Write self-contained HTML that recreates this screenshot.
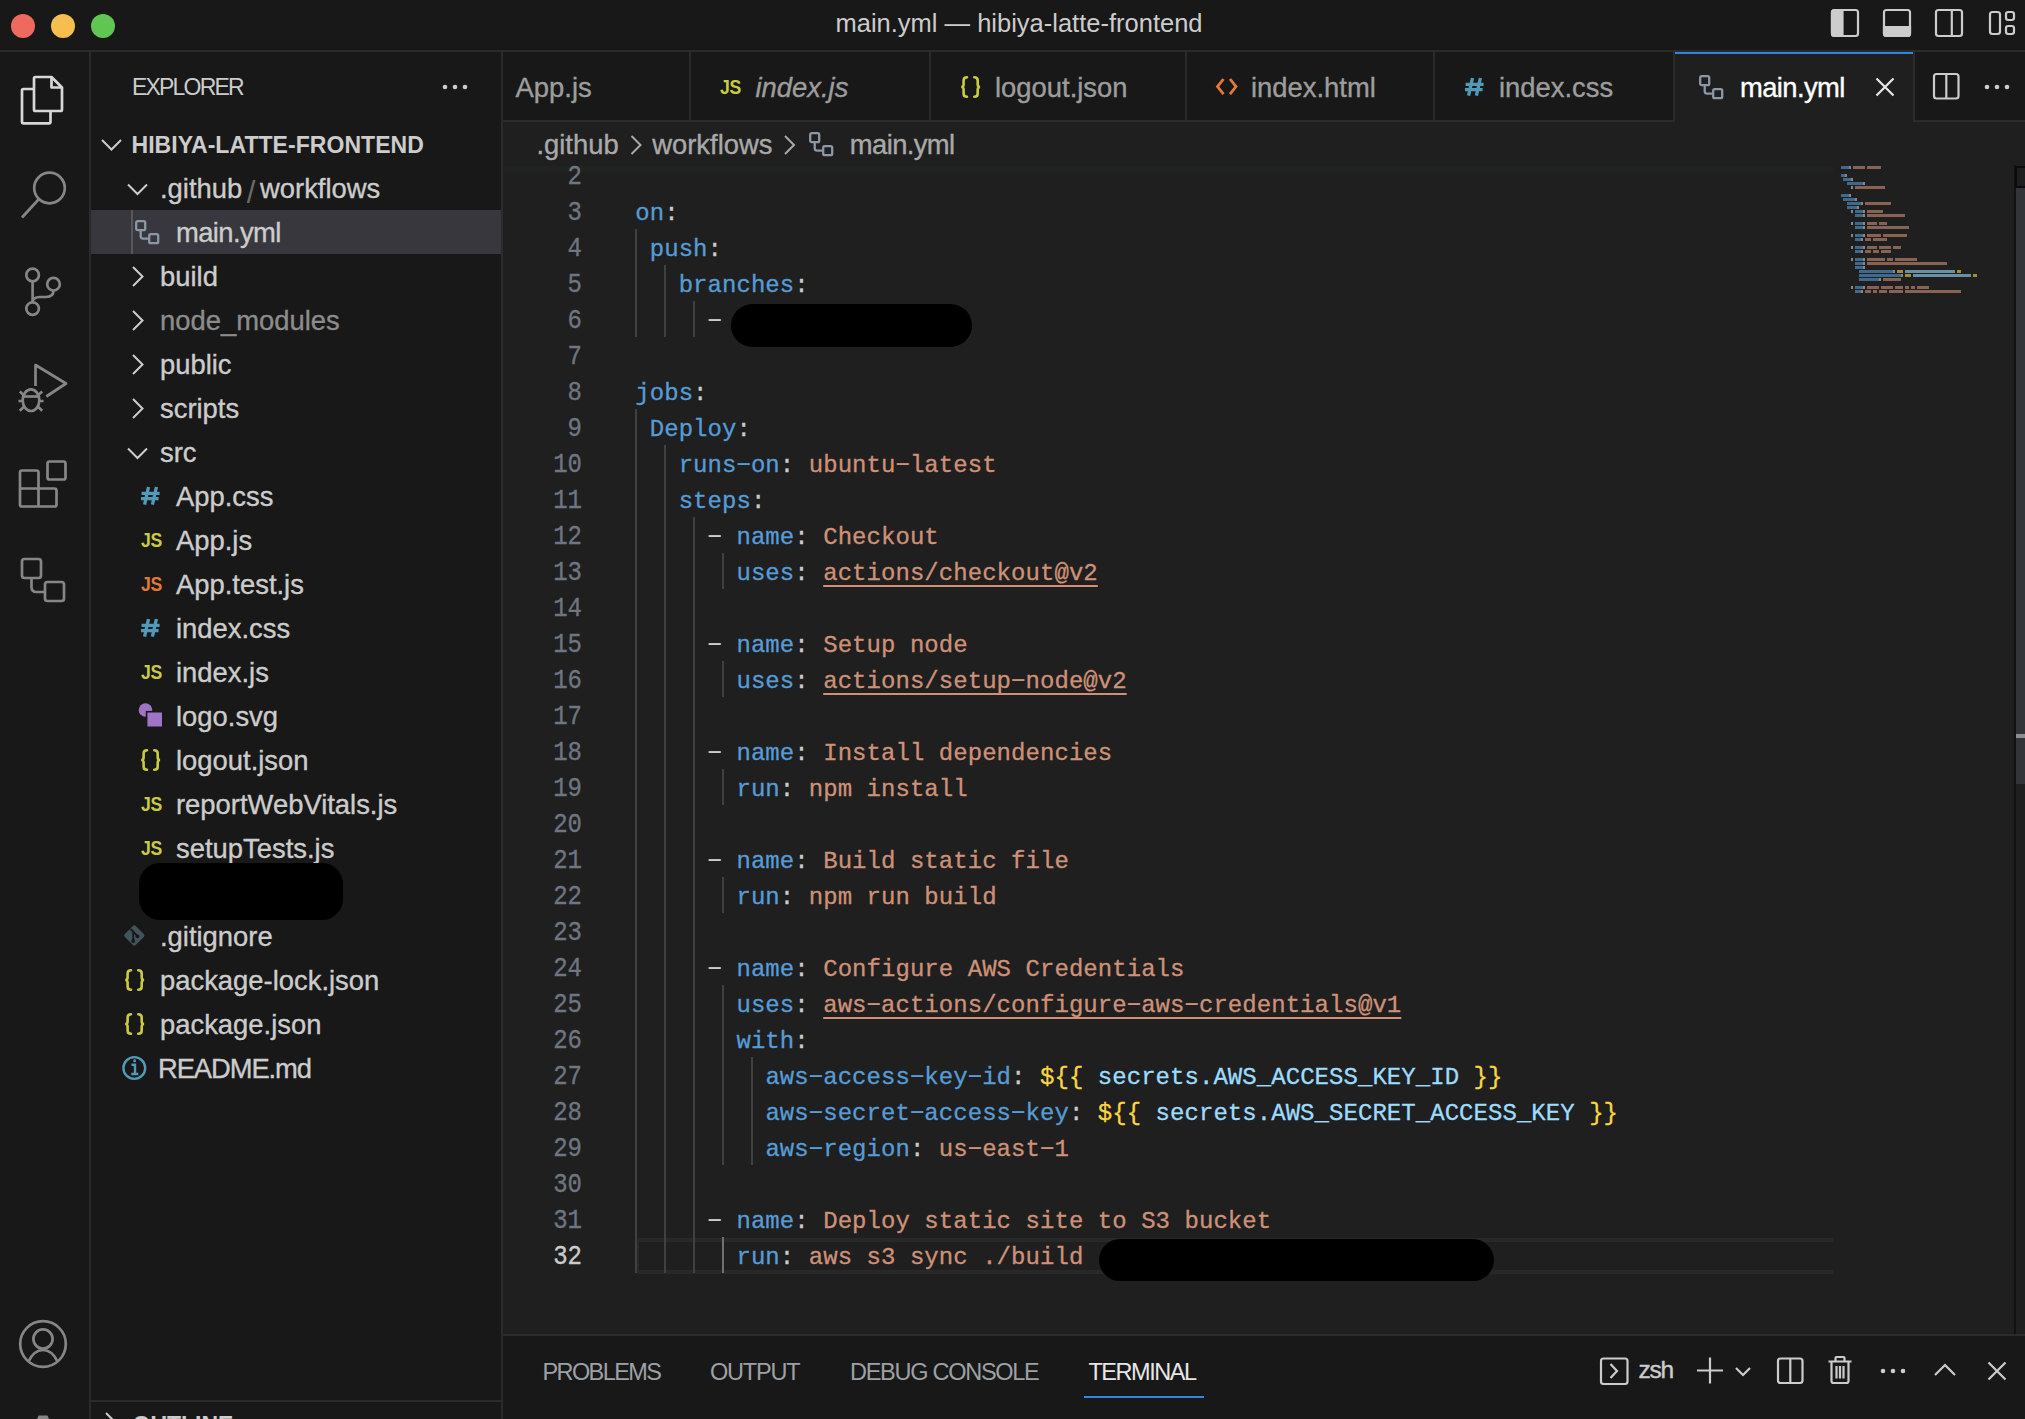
<!DOCTYPE html>
<html><head><meta charset="utf-8"><title>main.yml</title><style>
*{margin:0;padding:0;box-sizing:border-box}
html,body{width:2025px;height:1419px;overflow:hidden;background:#181818}
body{position:relative;font-family:"Liberation Sans",sans-serif;color:#cccccc}
.a{position:absolute}
.t{position:absolute;white-space:pre;line-height:44px;height:44px;font-size:27.4px;-webkit-text-stroke:0.35px currentColor}
.code{position:absolute;white-space:pre;font-family:"Liberation Mono",monospace;font-size:24px;line-height:36px;height:36px;letter-spacing:0.05px;-webkit-text-stroke:0.3px currentColor}
.ln{position:absolute;white-space:pre;font-family:"Liberation Mono",monospace;font-size:24px;line-height:36px;height:36px;text-align:right;color:#6e7681;width:60px;-webkit-text-stroke:0.3px currentColor}
.k{color:#569cd6}.s{color:#ce9178}.p{color:#cccccc}.y{color:#fad641}.v{color:#9cdcfe}
.u{text-decoration:underline;text-decoration-thickness:2px;text-underline-offset:5px}
svg{position:absolute;overflow:visible}
</style></head><body>
<div class="a" style="left:0px;top:0px;width:2025px;height:50px;background:#181818;"></div>
<div class="a" style="left:0px;top:50px;width:2025px;height:2px;background:#2b2b2b;"></div>
<div class="a" style="left:89px;top:52px;width:2px;height:1367px;background:#2b2b2b;"></div>
<div class="a" style="left:501px;top:52px;width:2px;height:1367px;background:#2b2b2b;"></div>
<div class="a" style="left:503px;top:52px;width:1522px;height:68px;background:#181818;"></div>
<div class="a" style="left:503px;top:120px;width:1522px;height:2px;background:#2b2b2b;"></div>
<div class="a" style="left:503px;top:122px;width:1522px;height:1212px;background:#1f1f1f;"></div>
<div class="a" style="left:503px;top:1334px;width:1522px;height:2px;background:#2b2b2b;"></div>
<div class="a" style="left:503px;top:1336px;width:1522px;height:83px;background:#181818;"></div>
<svg width="2025" height="50" style="left:0;top:0"><circle cx="23" cy="26" r="12" fill="#ee6a5f"/><circle cx="63" cy="26" r="12" fill="#f5be4f"/><circle cx="103" cy="26" r="12" fill="#61c554"/></svg>
<div class="a" style="left:0;width:2025px;top:0;height:50px;line-height:46px;text-align:center;font-size:25.5px;color:#cccccc;padding-left:13px">main.yml — hibiya-latte-frontend</div>
<svg width="2025" height="50" style="left:0;top:0" fill="none" stroke="#cccccc" stroke-width="2.2"><rect x="1832" y="10" width="26" height="26" rx="2.5"/><path d="M1832 12.5 Q1832 10 1834.5 10 H1842.5 V36 H1834.5 Q1832 36 1832 33.5 Z" fill="#cccccc"/><rect x="1884" y="10" width="26" height="26" rx="2.5"/><path d="M1884 27.2 H1910 V33.5 Q1910 36 1907.5 36 H1886.5 Q1884 36 1884 33.5 Z" fill="#cccccc"/><rect x="1936" y="10" width="26" height="26" rx="2.5"/><path d="M1951.8 10 V36"/><rect x="1990" y="12" width="10" height="22" rx="2.5"/><rect x="2006" y="12" width="8" height="8" rx="2.2"/><rect x="2006" y="26" width="8" height="8" rx="2.2"/></svg>
<svg width="90" height="1419" style="left:0;top:0" fill="none" stroke-width="2.7" stroke-linejoin="round" stroke-linecap="butt"><g stroke="#d7d7d7"><path d="M34 89 H23.5 Q22 89 22 90.5 V121.8 Q22 123.3 23.5 123.3 H49 Q50.5 123.3 50.5 121.8 V111"/><path d="M35.5 77 H51.5 L62 87.5 V109.5 Q62 111 60.5 111 H35.5 Q34 111 34 109.5 V78.5 Q34 77 35.5 77 Z"/><path d="M51.5 77 V87.5 H62"/></g><g stroke="#868686"><circle cx="49.5" cy="188" r="15.3"/><path d="M38.5 199.5 L22 217.5"/><circle cx="32.6" cy="275" r="6.3"/><circle cx="53.5" cy="284.2" r="6.3"/><circle cx="32.6" cy="308.6" r="6.3"/><path d="M32.6 281.3 V302.3"/><path d="M53.5 290.5 Q53.5 297 46 297 H40 Q33 297 32.6 302"/><path d="M35.5 386 V365 L66 383.5 L46.3 396.5"/><ellipse cx="31" cy="400.2" rx="8.3" ry="10.8"/><path d="M23 396.5 H39"/><path d="M18.5 401 H22.5 M39.5 401 H43.5 M19.8 391.5 L24.2 395.5 M42.2 391.5 L37.8 395.5 M19.8 410.8 L24.2 406.5 M42.2 410.8 L37.8 406.5"/><rect x="47.5" y="461.5" width="18" height="18" rx="2"/><path d="M22 470.5 H36.5 Q38.5 470.5 38.5 472.5 V488.5 H54.5 Q56.5 488.5 56.5 490.5 V504.5 Q56.5 506.5 54.5 506.5 H22 Q20 506.5 20 504.5 V472.5 Q20 470.5 22 470.5 Z"/><path d="M20 488.5 H38.5 V506.5"/><rect x="22" y="559" width="19" height="19" rx="2.5"/><rect x="45" y="582" width="19" height="19" rx="2.5"/><path d="M31.5 578 V587 Q31.5 592 36.5 592 H45"/><circle cx="43" cy="1344" r="22.8"/><circle cx="43" cy="1339" r="9.6"/><path d="M28.5 1361.5 Q34 1350 43 1350 Q52 1350 57.5 1361.5"/></g><path d="M38.5 1415.5 H47.5 L49 1419 H37 Z" fill="#868686"/></svg>
<div class="a" style="left:132px;top:65px;height:44px;line-height:44px;font-size:23px;letter-spacing:-1.8px;color:#cccccc;white-space:pre">EXPLORER</div>
<svg width="10" height="10" style="left:0;top:0"><circle cx="445" cy="87" r="2.3" fill="#cccccc"/><circle cx="455" cy="87" r="2.3" fill="#cccccc"/><circle cx="465" cy="87" r="2.3" fill="#cccccc"/></svg>
<div class="a" style="left:91px;top:210px;width:410px;height:44px;background:#37373d;"></div>
<div class="a" style="left:131px;top:210px;width:2px;height:44px;background:#585858;"></div>
<svg width="10" height="10" style="left:0;top:0" fill="none" stroke="#cccccc" stroke-width="2"><path d="M102 140 L111.5 149.5 L121 140" /><path d="M128 184.5 L137.5 194.0 L147 184.5" /><path d="M133 267.0 L142.5 276.5 L133 286.0" /><path d="M133 311.0 L142.5 320.5 L133 330.0" /><path d="M133 355.0 L142.5 364.5 L133 374.0" /><path d="M133 399.0 L142.5 408.5 L133 418.0" /><path d="M128 448.5 L137.5 458.0 L147 448.5" /></svg>
<div class="a" style="left:131.5px;top:122.5px;height:44px;line-height:44px;font-size:23px;font-weight:bold;color:#cccccc;white-space:pre;letter-spacing:0.05px">HIBIYA-LATTE-FRONTEND</div>
<div class="t" style="left:160px;top:167px;color:#cccccc;">.github</div>
<div class="t" style="left:246.8px;top:170.5px;color:#6a6a6a;font-size:31px;-webkit-text-stroke:0">/</div>
<div class="t" style="left:260px;top:167px;color:#cccccc;">workflows</div>
<div class="t" style="left:176px;top:211px;color:#cccccc;letter-spacing:-0.6px">main.yml</div>
<div class="t" style="left:160px;top:255px;color:#cccccc;">build</div>
<div class="t" style="left:160px;top:299px;color:#8c8c8c;">node_modules</div>
<div class="t" style="left:160px;top:343px;color:#cccccc;">public</div>
<div class="t" style="left:160px;top:387px;color:#cccccc;">scripts</div>
<div class="t" style="left:160px;top:431px;color:#cccccc;">src</div>
<div class="t" style="left:176px;top:475px;color:#cccccc;">App.css</div>
<div class="t" style="left:176px;top:519px;color:#cccccc;">App.js</div>
<div class="t" style="left:176px;top:563px;color:#cccccc;">App.test.js</div>
<div class="t" style="left:176px;top:607px;color:#cccccc;">index.css</div>
<div class="t" style="left:176px;top:651px;color:#cccccc;">index.js</div>
<div class="t" style="left:176px;top:695px;color:#cccccc;">logo.svg</div>
<div class="t" style="left:176px;top:739px;color:#cccccc;">logout.json</div>
<div class="t" style="left:176px;top:783px;color:#cccccc;">reportWebVitals.js</div>
<div class="t" style="left:176px;top:827px;color:#cccccc;">setupTests.js</div>
<div class="t" style="left:160px;top:915px;color:#cccccc;">.gitignore</div>
<div class="t" style="left:160px;top:959px;color:#cccccc;">package-lock.json</div>
<div class="t" style="left:160px;top:1003px;color:#cccccc;">package.json</div>
<div class="t" style="left:158px;top:1047px;color:#cccccc;letter-spacing:-1.1px">README.md</div>
<div class="a" style="left:139px;top:863px;width:204px;height:57px;background:#000000;border-radius:21px"></div>
<svg width="24" height="24" style="left:135.3px;top:219.8px" fill="none" stroke="#8b98a6" stroke-width="2.3"><rect x="1.2" y="1.2" width="9" height="9" rx="1.5"/><rect x="14.2" y="14.2" width="9" height="9" rx="1.5"/><path d="M5.7 10.2 V16 Q5.7 18.7 8.4 18.7 H14.2"/></svg>
<svg width="20" height="20" style="left:141.3px;top:486.5px" fill="none" stroke="#519aba" stroke-width="3.3"><path d="M7.5 0 L3.6 17.7 M15.4 0 L11.4 17.7 M0.6 6.3 H18.6 M0 11.6 H17.6"/></svg>
<div class="a" style="left:140.5px;top:529px;font-size:21px;line-height:21px;font-weight:bold;color:#cbcb41;letter-spacing:-0.5px;white-space:pre;transform:scaleX(0.84);transform-origin:0 0">JS</div>
<div class="a" style="left:140.5px;top:573px;font-size:21px;line-height:21px;font-weight:bold;color:#e37933;letter-spacing:-0.5px;white-space:pre;transform:scaleX(0.84);transform-origin:0 0">JS</div>
<svg width="20" height="20" style="left:141.3px;top:618.5px" fill="none" stroke="#519aba" stroke-width="3.3"><path d="M7.5 0 L3.6 17.7 M15.4 0 L11.4 17.7 M0.6 6.3 H18.6 M0 11.6 H17.6"/></svg>
<div class="a" style="left:140.5px;top:661px;font-size:21px;line-height:21px;font-weight:bold;color:#cbcb41;letter-spacing:-0.5px;white-space:pre;transform:scaleX(0.84);transform-origin:0 0">JS</div>
<svg width="30" height="30" style="left:0;top:0"><circle cx="145.5" cy="710" r="6.8" fill="#a074c4"/><rect x="146.6" y="711.7" width="16.2" height="15.6" fill="#a074c4" stroke="#181818" stroke-width="1.6"/></svg>
<svg width="22" height="22" style="left:139.8px;top:748.5px" fill="none" stroke="#cbcb41" stroke-width="2.6" stroke-linecap="round"><path d="M7 1.2 Q3.6 1.2 3.6 4.5 V8.5 Q3.6 11 1.2 11 Q3.6 11 3.6 13.5 V17.5 Q3.6 20.8 7 20.8"/><path d="M14.3 1.2 Q17.7 1.2 17.7 4.5 V8.5 Q17.7 11 20.1 11 Q17.7 11 17.7 13.5 V17.5 Q17.7 20.8 14.3 20.8"/></svg>
<div class="a" style="left:140.5px;top:793px;font-size:21px;line-height:21px;font-weight:bold;color:#cbcb41;letter-spacing:-0.5px;white-space:pre;transform:scaleX(0.84);transform-origin:0 0">JS</div>
<div class="a" style="left:140.5px;top:837px;font-size:21px;line-height:21px;font-weight:bold;color:#cbcb41;letter-spacing:-0.5px;white-space:pre;transform:scaleX(0.84);transform-origin:0 0">JS</div>
<svg width="30" height="30" style="left:0;top:0"><path d="M132.9 925.9 Q134.3 924.5 135.7 925.9 L143.8 934.1 Q145.2 935.5 143.8 936.9 L135.7 945.1 Q134.3 946.5 132.9 945.1 L124.8 936.9 Q123.4 935.5 124.8 934.1 Z" fill="#41535b"/><path d="M130.5 929.0 L137.5 936.0 M133.2 931.7 V941.0" stroke="#181818" stroke-width="1.8" fill="none"/><circle cx="133.2" cy="941.0" r="1.9" fill="#181818"/><circle cx="137.5" cy="936.3" r="1.9" fill="#181818"/></svg>
<svg width="22" height="22" style="left:123.5px;top:968.5px" fill="none" stroke="#cbcb41" stroke-width="2.6" stroke-linecap="round"><path d="M7 1.2 Q3.6 1.2 3.6 4.5 V8.5 Q3.6 11 1.2 11 Q3.6 11 3.6 13.5 V17.5 Q3.6 20.8 7 20.8"/><path d="M14.3 1.2 Q17.7 1.2 17.7 4.5 V8.5 Q17.7 11 20.1 11 Q17.7 11 17.7 13.5 V17.5 Q17.7 20.8 14.3 20.8"/></svg>
<svg width="22" height="22" style="left:123.5px;top:1012.5px" fill="none" stroke="#cbcb41" stroke-width="2.6" stroke-linecap="round"><path d="M7 1.2 Q3.6 1.2 3.6 4.5 V8.5 Q3.6 11 1.2 11 Q3.6 11 3.6 13.5 V17.5 Q3.6 20.8 7 20.8"/><path d="M14.3 1.2 Q17.7 1.2 17.7 4.5 V8.5 Q17.7 11 20.1 11 Q17.7 11 17.7 13.5 V17.5 Q17.7 20.8 14.3 20.8"/></svg>
<svg width="30" height="30" style="left:0;top:0"><circle cx="134.3" cy="1068" r="10.9" fill="none" stroke="#519aba" stroke-width="2.4"/><path d="M131.5 1064.8 H135 V1074 M131.3 1074 H138.3" stroke="#519aba" stroke-width="2.4" fill="none"/><circle cx="134.6" cy="1060.8" r="1.5" fill="#519aba"/></svg>
<div class="a" style="left:91px;top:1400px;width:410px;height:2px;background:#2b2b2b;"></div>
<svg width="10" height="10" style="left:0;top:0" fill="none" stroke="#cccccc" stroke-width="2"><path d="M106 1413 L113 1420 L106 1427"/></svg>
<div class="a" style="left:132.5px;top:1410px;height:30px;line-height:30px;font-size:23px;font-weight:bold;color:#cccccc;white-space:pre">OUTLINE</div>
<div class="a" style="left:689px;top:52px;width:2px;height:68px;background:#2b2b2b;"></div>
<div class="a" style="left:929px;top:52px;width:2px;height:68px;background:#2b2b2b;"></div>
<div class="a" style="left:1185px;top:52px;width:2px;height:68px;background:#2b2b2b;"></div>
<div class="a" style="left:1433px;top:52px;width:2px;height:68px;background:#2b2b2b;"></div>
<div class="a" style="left:1673px;top:52px;width:2px;height:68px;background:#2b2b2b;"></div>
<div class="a" style="left:1913px;top:52px;width:2px;height:68px;background:#2b2b2b;"></div>
<div class="a" style="left:1675px;top:52px;width:238px;height:70px;background:#1f1f1f;"></div>
<div class="a" style="left:1675px;top:52px;width:238px;height:2px;background:#3285e1;"></div>
<div class="t" style="left:515.6px;top:65.5px;color:#9d9d9d;">App.js</div>
<div class="a" style="left:720.4px;top:76px;font-size:21px;line-height:21px;font-weight:bold;color:#cbcb41;letter-spacing:-0.5px;white-space:pre;transform:scaleX(0.84);transform-origin:0 0">JS</div>
<div class="t" style="left:755.5px;top:65.5px;color:#9d9d9d;font-style:italic">index.js</div>
<svg width="22" height="22" style="left:959.8px;top:75.5px" fill="none" stroke="#cbcb41" stroke-width="2.6" stroke-linecap="round"><path d="M7 1.2 Q3.6 1.2 3.6 4.5 V8.5 Q3.6 11 1.2 11 Q3.6 11 3.6 13.5 V17.5 Q3.6 20.8 7 20.8"/><path d="M14.3 1.2 Q17.7 1.2 17.7 4.5 V8.5 Q17.7 11 20.1 11 Q17.7 11 17.7 13.5 V17.5 Q17.7 20.8 14.3 20.8"/></svg>
<div class="t" style="left:995px;top:65.5px;color:#9d9d9d;">logout.json</div>
<svg width="10" height="10" style="left:0;top:0" fill="none" stroke="#e37933" stroke-width="2.8"><path d="M1223.5 79 L1217.5 86.6 L1223.5 94.2 M1230 79 L1236 86.6 L1230 94.2"/></svg>
<div class="t" style="left:1251px;top:65.5px;color:#9d9d9d;">index.html</div>
<svg width="20" height="20" style="left:1465.2px;top:77.8px" fill="none" stroke="#519aba" stroke-width="3.3"><path d="M7.5 0 L3.6 17.7 M15.4 0 L11.4 17.7 M0.6 6.3 H18.6 M0 11.6 H17.6"/></svg>
<div class="t" style="left:1499px;top:65.5px;color:#9d9d9d;">index.css</div>
<svg width="24" height="24" style="left:1699px;top:75px" fill="none" stroke="#8b98a6" stroke-width="2.3"><rect x="1.2" y="1.2" width="9" height="9" rx="1.5"/><rect x="14.2" y="14.2" width="9" height="9" rx="1.5"/><path d="M5.7 10.2 V16 Q5.7 18.7 8.4 18.7 H14.2"/></svg>
<div class="t" style="left:1740px;top:65.5px;color:#ffffff;letter-spacing:-0.6px">main.yml</div>
<svg width="10" height="10" style="left:0;top:0" fill="none" stroke="#e8e8e8" stroke-width="2.2"><path d="M1876.5 78.5 L1893.5 95.5 M1893.5 78.5 L1876.5 95.5"/></svg>
<svg width="10" height="10" style="left:0;top:0" fill="none" stroke="#cccccc" stroke-width="2.2"><rect x="1934" y="74" width="24.5" height="24.5" rx="2.5"/><path d="M1946.3 74 V98.5"/></svg>
<svg width="10" height="10" style="left:0;top:0" fill="#cccccc"><circle cx="1987" cy="87" r="2.3"/><circle cx="1997" cy="87" r="2.3"/><circle cx="2007" cy="87" r="2.3"/></svg>
<div class="t" style="left:536.4px;top:122.5px;color:#a9a9a9">.github</div>
<div class="t" style="left:652.2px;top:122.5px;color:#a9a9a9">workflows</div>
<div class="t" style="left:849.8px;top:122.5px;color:#a9a9a9;letter-spacing:-0.6px">main.yml</div>
<svg width="10" height="10" style="left:0;top:0" fill="none" stroke="#a9a9a9" stroke-width="2"><path d="M631.5 136 L640.5 145 L631.5 154 M785 136 L794 145 L785 154"/></svg>
<svg width="24" height="24" style="left:809px;top:132px" fill="none" stroke="#8b98a6" stroke-width="2.3"><rect x="1.2" y="1.2" width="9" height="9" rx="1.5"/><rect x="14.2" y="14.2" width="9" height="9" rx="1.5"/><path d="M5.7 10.2 V16 Q5.7 18.7 8.4 18.7 H14.2"/></svg>
<div class="a" style="left:503px;top:166px;width:1330px;height:6px;background:#212322;"></div>
<div class="a" style="left:637px;top:1238px;width:1196px;height:36px;border-top:4px solid #282828;border-bottom:4px solid #282828;border-left:2px solid #282828"></div>
<div class="a" style="left:635px;top:229px;width:2px;height:108px;background:#404040;"></div>
<div class="a" style="left:664px;top:265px;width:2px;height:72px;background:#404040;"></div>
<div class="a" style="left:693px;top:301px;width:2px;height:36px;background:#404040;"></div>
<div class="a" style="left:635px;top:409px;width:2px;height:864px;background:#404040;"></div>
<div class="a" style="left:664px;top:445px;width:2px;height:828px;background:#404040;"></div>
<div class="a" style="left:693px;top:517px;width:2px;height:756px;background:#404040;"></div>
<div class="a" style="left:722px;top:553px;width:2px;height:36px;background:#404040;"></div>
<div class="a" style="left:722px;top:661px;width:2px;height:36px;background:#404040;"></div>
<div class="a" style="left:722px;top:769px;width:2px;height:36px;background:#404040;"></div>
<div class="a" style="left:722px;top:877px;width:2px;height:36px;background:#404040;"></div>
<div class="a" style="left:722px;top:985px;width:2px;height:180px;background:#404040;"></div>
<div class="a" style="left:751px;top:1057px;width:2px;height:108px;background:#404040;"></div>
<div class="a" style="left:722px;top:1237px;width:2px;height:36px;background:#707070;"></div>
<div class="ln" style="left:522px;top:159.5px;color:#6e7681;transform-origin:0 24.5px;transform:scaleY(1.12)">2</div>
<div class="ln" style="left:522px;top:195.5px;color:#6e7681;transform-origin:0 24.5px;transform:scaleY(1.12)">3</div>
<div class="ln" style="left:522px;top:231.5px;color:#6e7681;transform-origin:0 24.5px;transform:scaleY(1.12)">4</div>
<div class="ln" style="left:522px;top:267.5px;color:#6e7681;transform-origin:0 24.5px;transform:scaleY(1.12)">5</div>
<div class="ln" style="left:522px;top:303.5px;color:#6e7681;transform-origin:0 24.5px;transform:scaleY(1.12)">6</div>
<div class="ln" style="left:522px;top:339.5px;color:#6e7681;transform-origin:0 24.5px;transform:scaleY(1.12)">7</div>
<div class="ln" style="left:522px;top:375.5px;color:#6e7681;transform-origin:0 24.5px;transform:scaleY(1.12)">8</div>
<div class="ln" style="left:522px;top:411.5px;color:#6e7681;transform-origin:0 24.5px;transform:scaleY(1.12)">9</div>
<div class="ln" style="left:522px;top:447.5px;color:#6e7681;transform-origin:0 24.5px;transform:scaleY(1.12)">10</div>
<div class="ln" style="left:522px;top:483.5px;color:#6e7681;transform-origin:0 24.5px;transform:scaleY(1.12)">11</div>
<div class="ln" style="left:522px;top:519.5px;color:#6e7681;transform-origin:0 24.5px;transform:scaleY(1.12)">12</div>
<div class="ln" style="left:522px;top:555.5px;color:#6e7681;transform-origin:0 24.5px;transform:scaleY(1.12)">13</div>
<div class="ln" style="left:522px;top:591.5px;color:#6e7681;transform-origin:0 24.5px;transform:scaleY(1.12)">14</div>
<div class="ln" style="left:522px;top:627.5px;color:#6e7681;transform-origin:0 24.5px;transform:scaleY(1.12)">15</div>
<div class="ln" style="left:522px;top:663.5px;color:#6e7681;transform-origin:0 24.5px;transform:scaleY(1.12)">16</div>
<div class="ln" style="left:522px;top:699.5px;color:#6e7681;transform-origin:0 24.5px;transform:scaleY(1.12)">17</div>
<div class="ln" style="left:522px;top:735.5px;color:#6e7681;transform-origin:0 24.5px;transform:scaleY(1.12)">18</div>
<div class="ln" style="left:522px;top:771.5px;color:#6e7681;transform-origin:0 24.5px;transform:scaleY(1.12)">19</div>
<div class="ln" style="left:522px;top:807.5px;color:#6e7681;transform-origin:0 24.5px;transform:scaleY(1.12)">20</div>
<div class="ln" style="left:522px;top:843.5px;color:#6e7681;transform-origin:0 24.5px;transform:scaleY(1.12)">21</div>
<div class="ln" style="left:522px;top:879.5px;color:#6e7681;transform-origin:0 24.5px;transform:scaleY(1.12)">22</div>
<div class="ln" style="left:522px;top:915.5px;color:#6e7681;transform-origin:0 24.5px;transform:scaleY(1.12)">23</div>
<div class="ln" style="left:522px;top:951.5px;color:#6e7681;transform-origin:0 24.5px;transform:scaleY(1.12)">24</div>
<div class="ln" style="left:522px;top:987.5px;color:#6e7681;transform-origin:0 24.5px;transform:scaleY(1.12)">25</div>
<div class="ln" style="left:522px;top:1023.5px;color:#6e7681;transform-origin:0 24.5px;transform:scaleY(1.12)">26</div>
<div class="ln" style="left:522px;top:1059.5px;color:#6e7681;transform-origin:0 24.5px;transform:scaleY(1.12)">27</div>
<div class="ln" style="left:522px;top:1095.5px;color:#6e7681;transform-origin:0 24.5px;transform:scaleY(1.12)">28</div>
<div class="ln" style="left:522px;top:1131.5px;color:#6e7681;transform-origin:0 24.5px;transform:scaleY(1.12)">29</div>
<div class="ln" style="left:522px;top:1167.5px;color:#6e7681;transform-origin:0 24.5px;transform:scaleY(1.12)">30</div>
<div class="ln" style="left:522px;top:1203.5px;color:#6e7681;transform-origin:0 24.5px;transform:scaleY(1.12)">31</div>
<div class="ln" style="left:522px;top:1239.5px;color:#cccccc;transform-origin:0 24.5px;transform:scaleY(1.12)">32</div>
<div class="code" style="left:635.3px;top:195.5px"><span class="k">on</span><span class="p">:</span></div>
<div class="code" style="left:635.3px;top:231.5px"><span class="p"> </span><span class="k">push</span><span class="p">:</span></div>
<div class="code" style="left:635.3px;top:267.5px"><span class="p">   </span><span class="k">branches</span><span class="p">:</span></div>
<div class="code" style="left:635.3px;top:303.5px"><span class="p">     − </span></div>
<div class="code" style="left:635.3px;top:375.5px"><span class="k">jobs</span><span class="p">:</span></div>
<div class="code" style="left:635.3px;top:411.5px"><span class="p"> </span><span class="k">Deploy</span><span class="p">:</span></div>
<div class="code" style="left:635.3px;top:447.5px"><span class="p">   </span><span class="k">runs−on</span><span class="p">: </span><span class="s">ubuntu−latest</span></div>
<div class="code" style="left:635.3px;top:483.5px"><span class="p">   </span><span class="k">steps</span><span class="p">:</span></div>
<div class="code" style="left:635.3px;top:519.5px"><span class="p">     − </span><span class="k">name</span><span class="p">: </span><span class="s">Checkout</span></div>
<div class="code" style="left:635.3px;top:555.5px"><span class="p">       </span><span class="k">uses</span><span class="p">: </span><span class="s u">actions/checkout@v2</span></div>
<div class="code" style="left:635.3px;top:627.5px"><span class="p">     − </span><span class="k">name</span><span class="p">: </span><span class="s">Setup node</span></div>
<div class="code" style="left:635.3px;top:663.5px"><span class="p">       </span><span class="k">uses</span><span class="p">: </span><span class="s u">actions/setup−node@v2</span></div>
<div class="code" style="left:635.3px;top:735.5px"><span class="p">     − </span><span class="k">name</span><span class="p">: </span><span class="s">Install dependencies</span></div>
<div class="code" style="left:635.3px;top:771.5px"><span class="p">       </span><span class="k">run</span><span class="p">: </span><span class="s">npm install</span></div>
<div class="code" style="left:635.3px;top:843.5px"><span class="p">     − </span><span class="k">name</span><span class="p">: </span><span class="s">Build static file</span></div>
<div class="code" style="left:635.3px;top:879.5px"><span class="p">       </span><span class="k">run</span><span class="p">: </span><span class="s">npm run build</span></div>
<div class="code" style="left:635.3px;top:951.5px"><span class="p">     − </span><span class="k">name</span><span class="p">: </span><span class="s">Configure AWS Credentials</span></div>
<div class="code" style="left:635.3px;top:987.5px"><span class="p">       </span><span class="k">uses</span><span class="p">: </span><span class="s u">aws−actions/configure−aws−credentials@v1</span></div>
<div class="code" style="left:635.3px;top:1023.5px"><span class="p">       </span><span class="k">with</span><span class="p">:</span></div>
<div class="code" style="left:635.3px;top:1059.5px"><span class="p">         </span><span class="k">aws−access−key−id</span><span class="p">: </span><span class="y">${{</span><span class="p"> </span><span class="v">secrets.AWS_ACCESS_KEY_ID</span><span class="p"> </span><span class="y">}}</span></div>
<div class="code" style="left:635.3px;top:1095.5px"><span class="p">         </span><span class="k">aws−secret−access−key</span><span class="p">: </span><span class="y">${{</span><span class="p"> </span><span class="v">secrets.AWS_SECRET_ACCESS_KEY</span><span class="p"> </span><span class="y">}}</span></div>
<div class="code" style="left:635.3px;top:1131.5px"><span class="p">         </span><span class="k">aws−region</span><span class="p">: </span><span class="s">us−east−1</span></div>
<div class="code" style="left:635.3px;top:1203.5px"><span class="p">     − </span><span class="k">name</span><span class="p">: </span><span class="s">Deploy static site to S3 bucket</span></div>
<div class="code" style="left:635.3px;top:1239.5px"><span class="p">       </span><span class="k">run</span><span class="p">: </span><span class="s">aws s3 sync ./build </span></div>
<div class="a" style="left:731px;top:304px;width:241px;height:43px;background:#000000;border-radius:21.5px"></div>
<div class="a" style="left:1099px;top:1239px;width:395px;height:42px;background:#000000;border-radius:21px"></div>
<svg width="10" height="10" style="left:0;top:0" opacity="0.6"><rect x="1841" y="166" width="8" height="3" fill="#569cd6"/><rect x="1849" y="166" width="2" height="3" fill="#cccccc"/><rect x="1853" y="166" width="12" height="3" fill="#ce9178"/><rect x="1867" y="166" width="14" height="3" fill="#ce9178"/><rect x="1841" y="174" width="4" height="3" fill="#569cd6"/><rect x="1845" y="174" width="2" height="3" fill="#cccccc"/><rect x="1843" y="178" width="8" height="3" fill="#569cd6"/><rect x="1851" y="178" width="2" height="3" fill="#cccccc"/><rect x="1847" y="182" width="16" height="3" fill="#569cd6"/><rect x="1863" y="182" width="2" height="3" fill="#cccccc"/><rect x="1851" y="186" width="2" height="3" fill="#cccccc"/><rect x="1855" y="186" width="30" height="3" fill="#ce9178"/><rect x="1841" y="194" width="8" height="3" fill="#569cd6"/><rect x="1849" y="194" width="2" height="3" fill="#cccccc"/><rect x="1843" y="198" width="12" height="3" fill="#569cd6"/><rect x="1855" y="198" width="2" height="3" fill="#cccccc"/><rect x="1847" y="202" width="14" height="3" fill="#569cd6"/><rect x="1861" y="202" width="2" height="3" fill="#cccccc"/><rect x="1865" y="202" width="26" height="3" fill="#ce9178"/><rect x="1847" y="206" width="10" height="3" fill="#569cd6"/><rect x="1857" y="206" width="2" height="3" fill="#cccccc"/><rect x="1851" y="210" width="2" height="3" fill="#cccccc"/><rect x="1855" y="210" width="8" height="3" fill="#569cd6"/><rect x="1863" y="210" width="2" height="3" fill="#cccccc"/><rect x="1867" y="210" width="16" height="3" fill="#ce9178"/><rect x="1855" y="214" width="8" height="3" fill="#569cd6"/><rect x="1863" y="214" width="2" height="3" fill="#cccccc"/><rect x="1867" y="214" width="38" height="3" fill="#ce9178"/><rect x="1851" y="222" width="2" height="3" fill="#cccccc"/><rect x="1855" y="222" width="8" height="3" fill="#569cd6"/><rect x="1863" y="222" width="2" height="3" fill="#cccccc"/><rect x="1867" y="222" width="10" height="3" fill="#ce9178"/><rect x="1879" y="222" width="8" height="3" fill="#ce9178"/><rect x="1855" y="226" width="8" height="3" fill="#569cd6"/><rect x="1863" y="226" width="2" height="3" fill="#cccccc"/><rect x="1867" y="226" width="42" height="3" fill="#ce9178"/><rect x="1851" y="234" width="2" height="3" fill="#cccccc"/><rect x="1855" y="234" width="8" height="3" fill="#569cd6"/><rect x="1863" y="234" width="2" height="3" fill="#cccccc"/><rect x="1867" y="234" width="14" height="3" fill="#ce9178"/><rect x="1883" y="234" width="24" height="3" fill="#ce9178"/><rect x="1855" y="238" width="6" height="3" fill="#569cd6"/><rect x="1861" y="238" width="2" height="3" fill="#cccccc"/><rect x="1865" y="238" width="6" height="3" fill="#ce9178"/><rect x="1873" y="238" width="14" height="3" fill="#ce9178"/><rect x="1851" y="246" width="2" height="3" fill="#cccccc"/><rect x="1855" y="246" width="8" height="3" fill="#569cd6"/><rect x="1863" y="246" width="2" height="3" fill="#cccccc"/><rect x="1867" y="246" width="10" height="3" fill="#ce9178"/><rect x="1879" y="246" width="12" height="3" fill="#ce9178"/><rect x="1893" y="246" width="8" height="3" fill="#ce9178"/><rect x="1855" y="250" width="6" height="3" fill="#569cd6"/><rect x="1861" y="250" width="2" height="3" fill="#cccccc"/><rect x="1865" y="250" width="6" height="3" fill="#ce9178"/><rect x="1873" y="250" width="6" height="3" fill="#ce9178"/><rect x="1881" y="250" width="10" height="3" fill="#ce9178"/><rect x="1851" y="258" width="2" height="3" fill="#cccccc"/><rect x="1855" y="258" width="8" height="3" fill="#569cd6"/><rect x="1863" y="258" width="2" height="3" fill="#cccccc"/><rect x="1867" y="258" width="18" height="3" fill="#ce9178"/><rect x="1887" y="258" width="6" height="3" fill="#ce9178"/><rect x="1895" y="258" width="22" height="3" fill="#ce9178"/><rect x="1855" y="262" width="8" height="3" fill="#569cd6"/><rect x="1863" y="262" width="2" height="3" fill="#cccccc"/><rect x="1867" y="262" width="80" height="3" fill="#ce9178"/><rect x="1855" y="266" width="8" height="3" fill="#569cd6"/><rect x="1863" y="266" width="2" height="3" fill="#cccccc"/><rect x="1859" y="270" width="34" height="3" fill="#569cd6"/><rect x="1893" y="270" width="2" height="3" fill="#cccccc"/><rect x="1897" y="270" width="6" height="3" fill="#fad641"/><rect x="1905" y="270" width="50" height="3" fill="#9cdcfe"/><rect x="1957" y="270" width="4" height="3" fill="#fad641"/><rect x="1859" y="274" width="42" height="3" fill="#569cd6"/><rect x="1901" y="274" width="2" height="3" fill="#cccccc"/><rect x="1905" y="274" width="6" height="3" fill="#fad641"/><rect x="1913" y="274" width="58" height="3" fill="#9cdcfe"/><rect x="1973" y="274" width="4" height="3" fill="#fad641"/><rect x="1859" y="278" width="20" height="3" fill="#569cd6"/><rect x="1879" y="278" width="2" height="3" fill="#cccccc"/><rect x="1883" y="278" width="18" height="3" fill="#ce9178"/><rect x="1851" y="286" width="2" height="3" fill="#cccccc"/><rect x="1855" y="286" width="8" height="3" fill="#569cd6"/><rect x="1863" y="286" width="2" height="3" fill="#cccccc"/><rect x="1867" y="286" width="12" height="3" fill="#ce9178"/><rect x="1881" y="286" width="12" height="3" fill="#ce9178"/><rect x="1895" y="286" width="8" height="3" fill="#ce9178"/><rect x="1905" y="286" width="4" height="3" fill="#ce9178"/><rect x="1911" y="286" width="4" height="3" fill="#ce9178"/><rect x="1917" y="286" width="12" height="3" fill="#ce9178"/><rect x="1855" y="290" width="6" height="3" fill="#569cd6"/><rect x="1861" y="290" width="2" height="3" fill="#cccccc"/><rect x="1865" y="290" width="6" height="3" fill="#ce9178"/><rect x="1873" y="290" width="4" height="3" fill="#ce9178"/><rect x="1879" y="290" width="8" height="3" fill="#ce9178"/><rect x="1889" y="290" width="14" height="3" fill="#ce9178"/><rect x="1905" y="290" width="56" height="3" fill="#ce9178"/></svg>
<div class="a" style="left:2014px;top:165px;width:2px;height:1169px;background:#0b0b0b;opacity:0.7"></div>
<div class="a" style="left:2016px;top:188px;width:9px;height:596px;background:#333437;"></div>
<div class="a" style="left:2015px;top:166px;width:10px;height:22px;border:2px solid #0b0b0b;border-right:none"></div>
<div class="a" style="left:2016px;top:734px;width:9px;height:4px;background:#8a8e90;"></div>
<div class="a" style="left:542.5px;top:1351.9px;height:40px;line-height:40px;font-size:23.5px;color:#9da1a6;white-space:pre;letter-spacing:-1.6px">PROBLEMS</div>
<div class="a" style="left:710px;top:1351.9px;height:40px;line-height:40px;font-size:23.5px;color:#9da1a6;white-space:pre;letter-spacing:-1.2px">OUTPUT</div>
<div class="a" style="left:850px;top:1351.9px;height:40px;line-height:40px;font-size:23.5px;color:#9da1a6;white-space:pre;letter-spacing:-1.27px">DEBUG CONSOLE</div>
<div class="a" style="left:1088.4px;top:1351.9px;height:40px;line-height:40px;font-size:23.5px;color:#e7e7e7;white-space:pre;letter-spacing:-1.45px">TERMINAL</div>
<div class="a" style="left:1084px;top:1396px;width:120px;height:2px;background:#3285e1;"></div>
<svg width="10" height="10" style="left:0;top:0" fill="none" stroke="#cccccc" stroke-width="2.2"><rect x="1601" y="1358.5" width="26.5" height="25.5" rx="2.5"/><path d="M1610.5 1364 L1617 1371 L1610.5 1378"/><path d="M1697 1370.5 H1723 M1710 1357.5 V1383.5"/><path d="M1736 1368 L1743 1375 L1750 1368"/><rect x="1778" y="1358.5" width="24.5" height="24.5" rx="2.5"/><path d="M1790.3 1358.5 V1383"/><path d="M1828.5 1361.5 H1851.5 M1835.5 1361.5 V1358 Q1835.5 1357 1836.5 1357 H1843.5 Q1844.5 1357 1844.5 1358 V1361.5 M1831.5 1361.5 V1381 Q1831.5 1383 1833.5 1383 H1846.5 Q1848.5 1383 1848.5 1381 V1361.5 M1836.5 1366 V1378.5 M1840 1366 V1378.5 M1843.5 1366 V1378.5"/><path d="M1935 1375 L1945 1365 L1955 1375"/><path d="M1988.5 1362.5 L2005.5 1379.5 M2005.5 1362.5 L1988.5 1379.5"/></svg>
<div class="a" style="left:1638.5px;top:1350px;height:40px;line-height:40px;font-size:24.5px;color:#cccccc;white-space:pre;letter-spacing:-1.2px;-webkit-text-stroke:0.4px #cccccc">zsh</div>
<svg width="10" height="10" style="left:0;top:0" fill="#cccccc"><circle cx="1883" cy="1371" r="2.3"/><circle cx="1893" cy="1371" r="2.3"/><circle cx="1903" cy="1371" r="2.3"/></svg>
</body></html>
